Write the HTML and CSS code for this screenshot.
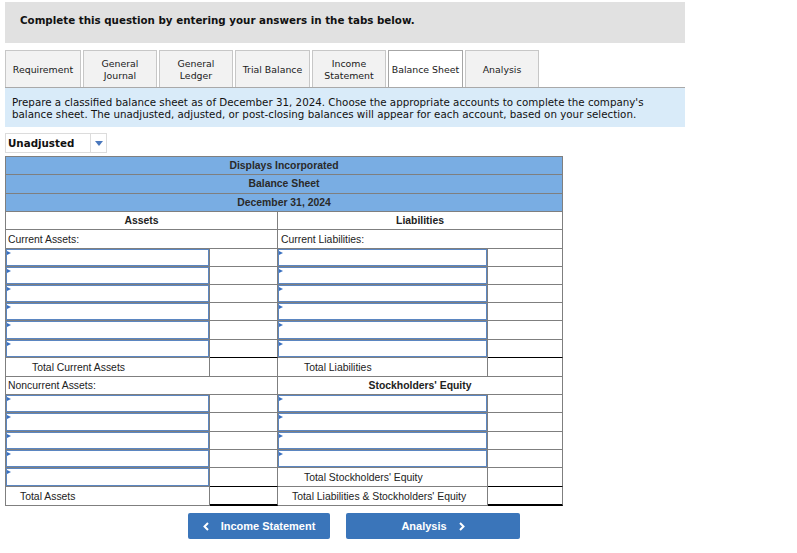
FILE: index.html
```html
<!DOCTYPE html>
<html>
<head>
<meta charset="utf-8">
<link rel="stylesheet" href="styles.css">
</head>
<body>
<div class="page">
  <div class="banner">Complete this question by entering your answers in the tabs below.</div>

  <div class="tabs">
    <div class="tab w76">Requirement</div>
    <div class="tab w74">General<br>Journal</div>
    <div class="tab w74">General<br>Ledger</div>
    <div class="tab w75">Trial Balance</div>
    <div class="tab w74">Income<br>Statement</div>
    <div class="tab w75 active">Balance Sheet</div>
    <div class="tab w74">Analysis</div>
  </div>

  <div class="instructions">Prepare a classified balance sheet as of December 31, 2024. Choose the appropriate accounts to complete the company's balance sheet. The unadjusted, adjusted, or post-closing balances will appear for each account, based on your selection.</div>

  <div class="select">
    <span class="select-label">Unadjusted</span>
    <span class="select-caret"><span class="caret"></span></span>
  </div>

  <table class="bs">
    <colgroup>
      <col class="c1"><col class="c2"><col class="c3"><col class="c4">
    </colgroup>
    <tr class="hd"><td colspan="4">Displays Incorporated</td></tr>
    <tr class="hd h19"><td colspan="4">Balance Sheet</td></tr>
    <tr class="hd"><td colspan="4">December 31, 2024</td></tr>
    <tr><td colspan="2" class="sec">Assets</td><td colspan="2" class="sec">Liabilities</td></tr>
    <tr class="h19"><td colspan="2" class="lbl">Current Assets:</td><td colspan="2" class="lbl r">Current Liabilities:</td></tr>
    <tr><td class="in"><span class="tri"></span></td><td></td><td class="in"><span class="tri"></span></td><td></td></tr>
    <tr><td class="in"><span class="tri"></span></td><td></td><td class="in"><span class="tri"></span></td><td></td></tr>
    <tr><td class="in"><span class="tri"></span></td><td></td><td class="in"><span class="tri"></span></td><td></td></tr>
    <tr><td class="in"><span class="tri"></span></td><td></td><td class="in"><span class="tri"></span></td><td></td></tr>
    <tr class="h19"><td class="in"><span class="tri"></span></td><td></td><td class="in"><span class="tri"></span></td><td></td></tr>
    <tr><td class="in"><span class="tri"></span></td><td class="ul"></td><td class="in"><span class="tri"></span></td><td class="ul"></td></tr>
    <tr class="h19"><td class="tot">Total Current Assets</td><td></td><td class="tot">Total Liabilities</td><td></td></tr>
    <tr><td colspan="2" class="lbl">Noncurrent Assets:</td><td colspan="2" class="sec">Stockholders' Equity</td></tr>
    <tr><td class="in"><span class="tri"></span></td><td></td><td class="in"><span class="tri"></span></td><td></td></tr>
    <tr class="h19"><td class="in"><span class="tri"></span></td><td></td><td class="in"><span class="tri"></span></td><td></td></tr>
    <tr><td class="in"><span class="tri"></span></td><td></td><td class="in"><span class="tri"></span></td><td></td></tr>
    <tr><td class="in"><span class="tri"></span></td><td></td><td class="in"><span class="tri"></span></td><td></td></tr>
    <tr class="h19"><td class="in"><span class="tri"></span></td><td class="ul"></td><td class="tot">Total Stockholders' Equity</td><td class="ul"></td></tr>
    <tr class="h19"><td class="tot2">Total Assets</td><td class="dbl"></td><td class="tot2">Total Liabilities &amp; Stockholders' Equity</td><td class="dbl"></td></tr>
  </table>

  <div class="nav">
    <div class="btn prev">
      <svg class="chev" width="6" height="9" viewBox="0 0 6 9"><polyline points="5,1 1.5,4.5 5,8" fill="none" stroke="#fff" stroke-width="2"/></svg>
      <span>Income Statement</span>
    </div>
    <div class="btn next">
      <span>Analysis</span>
      <svg class="chev" width="6" height="9" viewBox="0 0 6 9"><polyline points="1,1 4.5,4.5 1,8" fill="none" stroke="#fff" stroke-width="2"/></svg>
    </div>
  </div>
</div>
</body>
</html>
```

FILE: styles.css
```css
html, body {
  margin: 0;
  padding: 0;
  background: #fff;
}

.page {
  padding: 2px 5px 0 5px;
  font-family: "DejaVu Sans", Verdana, sans-serif;
  color: #111;
}

.banner {
  width: 680px;
  height: 41px;
  box-sizing: border-box;
  background: #e1e1e1;
  padding: 12px 0 0 15px;
  font-size: 10.3px;
  font-weight: bold;
  line-height: 13px;
}

.tabs {
  display: flex;
  gap: 2px;
  margin-top: 7px;
}

.tab {
  min-width: 0;
  height: 37px;
  box-sizing: border-box;
  padding-top: 2px;
  border: 1px solid #c7c7c7;
  border-bottom: none;
  background: #f2f2f2;
  display: flex;
  align-items: center;
  justify-content: center;
  text-align: center;
  white-space: nowrap;
  font-size: 9.4px;
  line-height: 12px;
  color: #1a1a1a;
}

.tab.w76 { flex: 0 0 76px; }
.tab.w75 { flex: 0 0 75px; }
.tab.w74 { flex: 0 0 74px; }

.tab.active {
  background: #fff;
  border-color: #a6a6a6;
}

.instructions {
  width: 680px;
  box-sizing: border-box;
  height: 40px;
  border-top: 1px solid #a9a9a9;
  background: #d9ebf9;
  padding: 8px 7px 0 7px;
  font-size: 10.3px;
  line-height: 12px;
  color: #111;
}

.select {
  display: flex;
  width: 102px;
  height: 20px;
  box-sizing: border-box;
  border: 1px solid #dcdcdc;
  margin-top: 6px;
  background: #fff;
}

.select-label {
  width: 82px;
  border-right: 1px solid #dcdcdc;
  padding-left: 2px;
  font-size: 10.3px;
  font-weight: bold;
  line-height: 18px;
  color: #111;
}

.select-caret {
  flex: 1;
  display: flex;
  align-items: center;
  justify-content: center;
}

.caret {
  width: 0;
  height: 0;
  border-left: 4px solid transparent;
  border-right: 4px solid transparent;
  border-top: 5px solid #4a78bd;
}

.bs {
  margin-top: 3px;
  border-collapse: separate;
  border-spacing: 0;
  table-layout: fixed;
  width: 558px;
  border-top: 1px solid #7f7f7f;
  border-left: 1px solid #7f7f7f;
  font-family: "Liberation Sans", Arial, sans-serif;
  font-size: 10.4px;
  color: #222;
}

.c1 { width: 204px; }
.c2 { width: 68px; }
.c3 { width: 210px; }
.c4 { width: 75px; }

.bs tr { height: 18px; }
.bs tr.h19 { height: 19px; }

.bs td {
  box-sizing: border-box;
  border-right: 1px solid #7f7f7f;
  border-bottom: 1px solid #7f7f7f;
  padding: 1px 0 0 0;
  vertical-align: middle;
  white-space: nowrap;
  line-height: 12px;
}

.bs tr.hd td {
  background: #79ade3;
  text-align: center;
  font-weight: bold;
  color: #2a2a2a;
  padding-top: 0;
}

.bs td.sec {
  text-align: center;
  font-weight: bold;
}

.bs td.lbl { padding-left: 2px; }
.bs td.lbl.r { padding-left: 3px; }
.bs td.tot { padding-left: 26px; }
.bs td.tot2 { padding-left: 14px; }

.bs td.in {
  vertical-align: top;
  padding: 0;
  box-shadow: inset 0 0 0 1px #5b86c1;
}

.tri {
  display: block;
  width: 0;
  height: 0;
  margin: 2px 0 0 1px;
  border-left: 4px solid #3a70c0;
  border-top: 2.5px solid transparent;
  border-bottom: 2.5px solid transparent;
}

.bs td.ul { border-bottom-color: #000; }
.bs td.dbl { border-bottom: 2px solid #000; }

.nav {
  display: flex;
  gap: 16px;
  margin-top: 7px;
  padding-left: 183px;
}

.btn {
  height: 26px;
  box-sizing: border-box;
  background: #3a75ba;
  border-radius: 2px;
  display: flex;
  align-items: center;
  justify-content: center;
  gap: 12px;
  color: #fff;
  font-family: "Liberation Sans", Arial, sans-serif;
  font-weight: bold;
  font-size: 11px;
}

.btn.prev { width: 142px; }
.btn.next { width: 174px; }
```
